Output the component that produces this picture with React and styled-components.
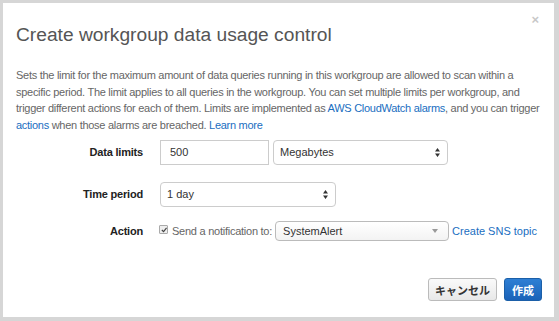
import styled, { createGlobalStyle } from 'styled-components';

const Global = createGlobalStyle`
  html, body {
    margin: 0;
    padding: 0;
    background: #d6d6d6;
    font-family: "Liberation Sans", Arial, sans-serif;
  }
`;

const Backdrop = styled.div`
  width: 559px;
  height: 321px;
  padding: 3px 5px 4px 3px;
  box-sizing: border-box;
`;

const Modal = styled.div`
  position: relative;
  background: #fff;
  height: 100%;
  box-sizing: border-box;
  padding: 0 12px 0 13px;
  display: flex;
  flex-direction: column;
`;

const Title = styled.h1`
  margin: 0;
  padding: 19px 0 0;
  font-size: 19.2px;
  font-weight: 400;
  color: #555;
  line-height: 26px;
`;

const Close = styled.span`
  position: absolute;
  top: 9px;
  right: 15px;
  font-size: 13px;
  color: #c8c8c8;
  font-weight: bold;
`;

const Desc = styled.p`
  margin: 19px 0 0;
  font-size: 11px;
  letter-spacing: -0.28px;
  line-height: 16.5px;
  white-space: nowrap;
  color: #666;
`;

const Link = styled.a`
  color: #1a6ebf;
  text-decoration: none;
  white-space: nowrap;
  font-size: ${p => p.$size || 'inherit'};
`;

const Form = styled.div`
  margin-top: 2px;
  display: grid;
  grid-template-columns: 127px 1fr;
  column-gap: 17px;
  align-items: center;
`;

const Label = styled.div`
  text-align: right;
  font-size: 11px;
  font-weight: bold;
  letter-spacing: -0.2px;
  color: #222;
`;

const Field = styled.div`
  display: flex;
  align-items: center;
  gap: ${p => p.$gap || '4px'};
  height: ${p => p.$h};
`;

const Input = styled.div`
  width: 109px;
  height: 25px;
  box-sizing: border-box;
  border: 1px solid #ccc;
  padding: 0 9px;
  font-size: 11px;
  color: #333;
  display: flex;
  align-items: center;
`;

const Select = styled.div`
  width: ${p => p.$w};
  height: 25px;
  box-sizing: border-box;
  border: 1px solid #ccc;
  border-radius: 4px;
  padding: 0 7px 0 6px;
  font-size: 11px;
  color: #333;
  display: flex;
  align-items: center;
  justify-content: space-between;
`;

const DropSelect = styled(Select)`
  height: 20px;
  border-color: #bbb;
  background: linear-gradient(#fff, #f3f3f3);
  padding: 0 10px 0 7px;
  flex-shrink: 0;
`;

const Check = styled.span`
  width: 7px;
  height: 7px;
  border: 1px solid #aaa;
  border-radius: 1px;
  background: #eee;
  display: inline-flex;
  align-items: center;
  justify-content: center;
  margin-top: -3px;
  margin-left: -1px;
  margin-right: 1px;
  flex-shrink: 0;
`;

const Muted = styled.span`
  font-size: 11px;
  color: #666;
  white-space: nowrap;
  letter-spacing: -0.25px;
`;

const Footer = styled.div`
  margin-top: auto;
  margin-bottom: 16px;
  display: flex;
  justify-content: flex-end;
  gap: 7px;
`;

const Button = styled.button`
  height: 23px;
  box-sizing: border-box;
  border-radius: 3px;
  font-family: "Noto Sans CJK JP", sans-serif;
  font-size: 11px;
  font-weight: bold;
  padding: 0 ${p => (p.$primary ? '7px' : '6px')};
  border: 1px solid ${p => (p.$primary ? '#1b5fa8' : '#bbb')};
  color: ${p => (p.$primary ? '#fff' : '#333')};
  background: ${p => (p.$primary ? 'linear-gradient(#2e7fd4, #1a62b8)' : 'linear-gradient(#fafafa, #e8e8e8)')};
`;

const Arrows = () => (
  <svg width="5" height="9" viewBox="0 0 5 9">
    <path d="M2.5 0 L5 3.5 H0 Z M2.5 9 L5 5.5 H0 Z" fill="#333" />
  </svg>
);

const Caret = () => (
  <svg width="6" height="4" viewBox="0 0 6 4">
    <path d="M0 0 H6 L3 4 Z" fill="#999" />
  </svg>
);

export default function App() {
  return (
    <>
      <Global />
      <Backdrop>
        <Modal>
          <Close>×</Close>
          <Title>Create workgroup data usage control</Title>
          <Desc>
            Sets the limit for the maximum amount of data queries running in this workgroup are allowed to scan within a<br />
            specific period. The limit applies to all queries in the workgroup. You can set multiple limits per workgroup, and<br />
            trigger different actions for each of them. Limits are implemented as <Link>AWS CloudWatch alarms</Link>, and you can trigger<br />
            <Link>actions</Link> when those alarms are breached. <Link>Learn more</Link>
          </Desc>
          <Form>
            <Label>Data limits</Label>
            <Field $h="34px">
              <Input>500</Input>
              <Select $w="175px">
                Megabytes <Arrows />
              </Select>
            </Field>
            <Label>Time period</Label>
            <Field $h="50px">
              <Select $w="176px">
                1 day <Arrows />
              </Select>
            </Field>
            <Label>Action</Label>
            <Field $h="24px" $gap="3px">
              <Check>
                <svg width="6" height="6" viewBox="0 0 7 7">
                  <path d="M1 3.5 L3 5.5 L6.5 1" stroke="#444" strokeWidth="1.4" fill="none" />
                </svg>
              </Check>
              <Muted>Send a notification to:</Muted>
              <DropSelect $w="174px">
                SystemAlert <Caret />
              </DropSelect>
              <Link $size="11px">Create SNS topic</Link>
            </Field>
          </Form>
          <Footer>
            <Button>キャンセル</Button>
            <Button $primary>作成</Button>
          </Footer>
        </Modal>
      </Backdrop>
    </>
  );
}
